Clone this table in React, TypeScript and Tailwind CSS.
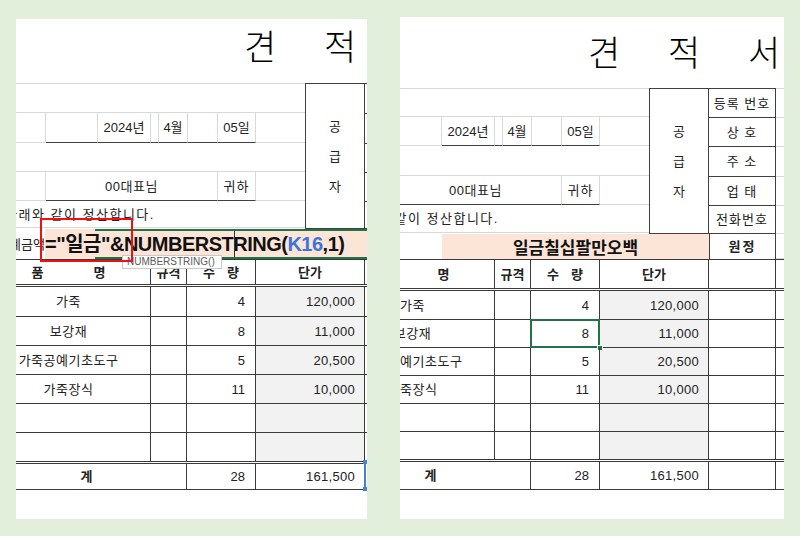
import React from 'react';

type Mode = 'edit' | 'result';

const LAYOUT = {
  edit: {
    shift: 'ml-[-29px]',
    title: 'h-[64px] pb-[21px]',
    r: ['h-[30px]', 'h-[30px]', 'h-[29px]', 'h-[29px]', 'h-[27px]'],
    amount: 'h-[30px]',
    head: 'h-[28px]',
    row: 'h-[29px]',
    total: 'h-[29px]',
  },
  result: {
    shift: 'ml-[-69px]',
    title: 'h-[71px] pb-[20px]',
    r: ['h-[29px]', 'h-[29px]', 'h-[30px]', 'h-[29px]', 'h-[28px]'],
    amount: 'h-[25px]',
    head: 'h-[32px]',
    row: 'h-[28px]',
    total: 'h-[31px]',
  },
};

const items = [
  { name: '가죽', qty: '4', price: '120,000' },
  { name: '보강재', qty: '8', price: '11,000' },
  { name: '가죽공예기초도구', qty: '5', price: '20,500' },
  { name: '가죽장식', qty: '11', price: '10,000' },
  { name: '', qty: '', price: '' },
  { name: '', qty: '', price: '' },
];

const labels = ['등록 번호', '상 호', '주 소', '업 태', '전화번호'];

function Sheet({ mode }: { mode: Mode }) {
  const L = LAYOUT[mode];
  const edit = mode === 'edit';

  return (
    <div className={`w-[520px] shrink-0 text-[13px] leading-none text-[#222] ${L.shift}`}>
      {/* title */}
      <div className={`flex items-end pl-[257px] font-['Noto_Sans_CJK_KR',sans-serif] font-light ${L.title}`}>
        <span className="w-[80px] text-[35px] leading-none text-black">견</span>
        <span className="w-[80px] text-[35px] leading-none text-black">적</span>
        <span className="w-[80px] text-[35px] leading-none text-black">서</span>
      </div>

      {/* upper block */}
      <div className="flex">
        <div className="flex w-[318px] shrink-0 flex-col">
          <div className={`border-y border-[#d9d9d9] ${L.r[0]}`} />
          <div className={`flex ${L.r[1]}`}>
            <div className="h-full w-[59px] shrink-0 border-r border-b border-[#d9d9d9]" />
            <div className={`h-full w-[52px] shrink-0 border-r border-b border-r-[#d9d9d9] ${edit ? 'border-b-[#404040]' : 'border-b-[#d9d9d9]'}`} />
            <div className="flex h-full w-[53px] shrink-0 items-center justify-center border-r border-b border-r-[#d9d9d9] border-b-[#404040]">2024년</div>
            <div className="h-full w-[8px] shrink-0 border-r border-b border-r-[#d9d9d9] border-b-[#404040]" />
            <div className="flex h-full w-[29px] shrink-0 items-center justify-center border-r border-b border-r-[#d9d9d9] border-b-[#404040]">4월</div>
            <div className="h-full w-[30px] shrink-0 border-r border-b border-r-[#d9d9d9] border-b-[#404040]" />
            <div className="flex h-full w-[38px] shrink-0 items-center justify-center border-r border-b border-r-[#d9d9d9] border-b-[#404040]">05일</div>
            <div className="h-full flex-1 border-b border-[#d9d9d9]" />
          </div>
          <div className={`border-b border-[#d9d9d9] ${L.r[2]}`} />
          <div className={`flex ${L.r[3]}`}>
            <div className="h-full w-[59px] shrink-0 border-r border-b border-[#d9d9d9]" />
            <div className="flex h-full w-[172px] shrink-0 items-center justify-center border-r border-b border-r-[#d9d9d9] border-b-[#404040] tracking-[0.5px]">00대표님</div>
            <div className="flex h-full w-[38px] shrink-0 items-center justify-center border-r border-b border-r-[#d9d9d9] border-b-[#404040] tracking-[1px]">귀하</div>
            <div className="h-full flex-1 border-b border-[#d9d9d9]" />
          </div>
          <div className={`flex items-center border-b border-[#d9d9d9] pl-[18px] tracking-[1.5px] ${L.r[4]}`}>
            아래와 같이 정산합니다.
          </div>
        </div>

        <div className="flex w-[60px] shrink-0 flex-col items-center justify-center border border-[#404040]">
          <span className="flex h-[30px] items-center">공</span>
          <span className="flex h-[30px] items-center">급</span>
          <span className="flex h-[30px] items-center">자</span>
        </div>

        <div className="flex w-[67px] shrink-0 flex-col border-t border-[#404040]">
          {labels.map((t, i) => (
            <div key={t} className={`flex items-center justify-center border-r border-b border-[#404040] whitespace-pre tracking-[1px] ${L.r[i]}`}>
              {t}
            </div>
          ))}
        </div>

        <div className="flex flex-1 flex-col border-t border-[#d9d9d9]">
          {L.r.map((h, i) => (
            <div key={i} className={`border-b border-[#d9d9d9] ${h}`} />
          ))}
        </div>
      </div>

      {/* amount row */}
      {edit ? (
        <div className={`flex ${L.amount}`}>
          <div className="flex h-full w-[58px] shrink-0 items-center justify-end whitespace-nowrap">합계금액</div>
          <div className="relative flex h-full w-[387px] shrink-0 items-center bg-[#fce4d6] font-bold text-[20px] tracking-[-0.5px] text-[#111]">
            <span className="relative">
              ="일금"&NUMBERSTRING(<span className="text-[#3d74d9]">K16</span>,1)
            </span>
            <div className="absolute top-0 bottom-0 left-[50px] right-0 border-y-2 border-[#217346]" />
            <div className="absolute top-[2px] bottom-[2px] left-[189px] w-px bg-[#333]" />
          </div>
          <div className="h-full flex-1" />
        </div>
      ) : (
        <div className={`flex ${L.amount}`}>
          <div className="flex h-full w-[59px] shrink-0 items-center justify-end whitespace-nowrap">합계금액</div>
          <div className="h-full w-[52px] shrink-0" />
          <div className="flex h-full w-[267px] shrink-0 items-center justify-center bg-[#fce4d6] font-['Noto_Sans_CJK_KR',sans-serif] text-[17px] font-bold text-[#111]">
            일금칠십팔만오백
          </div>
          <div className="flex h-full w-[67px] shrink-0 items-center justify-center border-x border-[#404040] font-bold tracking-[2px]">원정</div>
          <div className="h-full flex-1 border-b border-[#d9d9d9]" />
        </div>
      )}

      {/* table header */}
      <div className={`flex border-t border-b-[3px] border-t-[#3a3a3a] border-b-[#3a3a3a] border-double font-bold ${L.head}`}>
        <div className="flex h-full w-[164px] shrink-0 items-center justify-center gap-[50px] border-r border-[#3a3a3a]">
          <span>품</span>
          <span>명</span>
        </div>
        <div className="flex h-full w-[36px] shrink-0 items-center justify-center border-r border-[#3a3a3a]">규격</div>
        <div className="flex h-full w-[69px] shrink-0 items-center justify-center gap-[12px] border-r border-[#3a3a3a]">
          <span>수</span>
          <span>량</span>
        </div>
        <div className="flex h-full w-[109px] shrink-0 items-center justify-center border-r border-[#3a3a3a]">단가</div>
        <div className="h-full w-[67px] shrink-0 border-r border-[#3a3a3a]" />
        <div className="h-full flex-1" />
      </div>

      {/* items */}
      {items.map((it, i) => (
        <div key={i} className={`flex ${i > 0 ? 'border-t border-[#3a3a3a]' : ''} ${L.row}`}>
          <div className="flex h-full w-[164px] shrink-0 items-center justify-center border-r border-[#3a3a3a] whitespace-nowrap tracking-[0.5px]">{it.name}</div>
          <div className="h-full w-[36px] shrink-0 border-r border-[#3a3a3a]" />
          <div className="relative flex h-full w-[69px] shrink-0 items-center justify-end border-r border-[#3a3a3a] pr-[10px]">
            {it.qty}
            {!edit && i === 1 && (
              <>
                <div className="absolute -inset-px border-2 border-[#217346]" />
                <div className="absolute -right-[4px] -bottom-[4px] h-[6px] w-[6px] border border-white bg-[#217346]" />
              </>
            )}
          </div>
          <div className="flex h-full w-[109px] shrink-0 items-center justify-end border-r border-[#3a3a3a] bg-[#f2f2f2] pr-[9px] tracking-[0.3px]">{it.price}</div>
          <div className="h-full w-[67px] shrink-0 border-r border-[#3a3a3a]" />
          <div className="h-full flex-1" />
        </div>
      ))}

      {/* total */}
      <div className={`flex border-t-[3px] border-b border-double border-t-[#3a3a3a] border-b-[#3a3a3a] ${L.total}`}>
        <div className="flex h-full w-[200px] shrink-0 items-center justify-center border-r border-[#3a3a3a] font-bold">계</div>
        <div className="flex h-full w-[69px] shrink-0 items-center justify-end border-r border-[#3a3a3a] pr-[10px]">28</div>
        <div className="relative flex h-full w-[109px] shrink-0 items-center justify-end border-r border-[#3a3a3a] pr-[9px] tracking-[0.3px]">
          161,500
          {edit && (
            <>
              <div className="absolute -top-[3px] -bottom-px -right-[2px] w-[2px] bg-[#4a7fd4]" />
              <div className="absolute -top-[4px] -right-[3px] h-[4px] w-[4px] bg-[#4a7fd4]" />
              <div className="absolute -bottom-[2px] -right-[3px] h-[4px] w-[4px] bg-[#4a7fd4]" />
            </>
          )}
        </div>
        <div className="h-full w-[67px] shrink-0 border-r border-[#3a3a3a]" />
        <div className="h-full flex-1" />
      </div>
    </div>
  );
}

export default function App() {
  return (
    <div className="flex h-[536px] w-[800px] items-start gap-[33px] overflow-hidden bg-[#e2efda] pl-[16px] font-['Liberation_Sans','Noto_Sans_CJK_KR',sans-serif]">
      <div className="relative mt-[19px] flex h-[500px] w-[351px] shrink-0 overflow-hidden bg-white">
        <Sheet mode="edit" />
        {/* function tooltip */}
        <div className="absolute left-[106px] top-[236px] flex h-[14px] w-[100px] items-center border border-[#c8c8c8] bg-white pl-[4px] text-[10px] leading-none text-[#5a5a5a]">
          NUMBERSTRING()
        </div>
        {/* red highlight */}
        <div className="absolute left-[24px] top-[199px] h-[44px] w-[93px] border-2 border-[#f01010]" />
      </div>
      <div className="relative mt-[17px] flex h-[502px] w-[384px] shrink-0 overflow-hidden bg-white">
        <Sheet mode="result" />
      </div>
    </div>
  );
}
